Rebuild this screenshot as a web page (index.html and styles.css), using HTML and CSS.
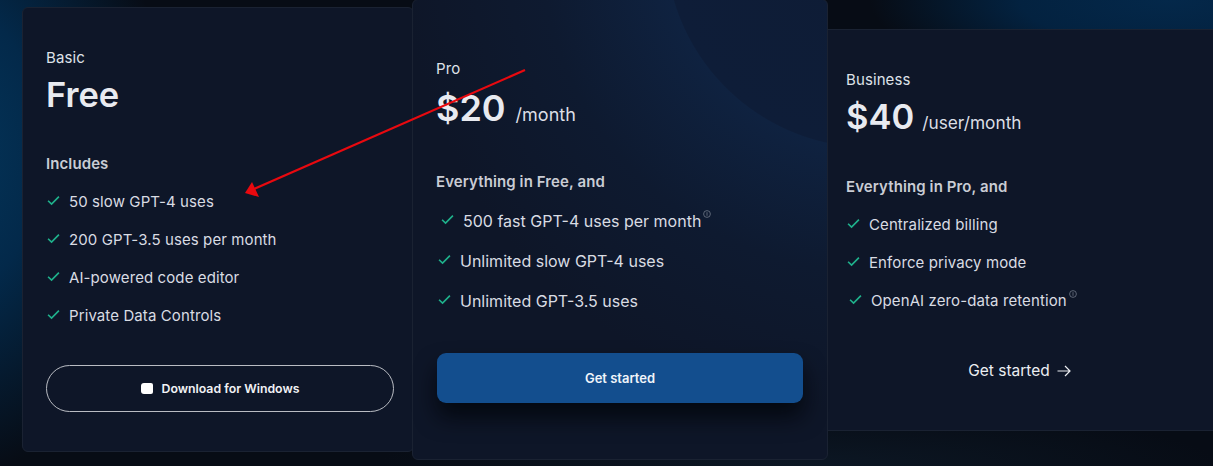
FILE: index.html
```html
<!DOCTYPE html>
<html lang="en">
<head>
<meta charset="utf-8">
<title>Pricing</title>
<link rel="stylesheet" href="styles.css">
</head>
<body>
<main class="plans">
  <section class="card card-basic">
    <p class="tier">Basic</p>
    <div class="price"><span class="amount">Free</span></div>
    <h3 class="inc">Includes</h3>
    <ul class="feats">
      <li><svg class="chk" viewBox="0 0 12 10"><path d="M1 5.2 4.2 8.4 11 1.4"/></svg><span>50 slow GPT-4 uses</span></li>
      <li><svg class="chk" viewBox="0 0 12 10"><path d="M1 5.2 4.2 8.4 11 1.4"/></svg><span>200 GPT-3.5 uses per month</span></li>
      <li><svg class="chk" viewBox="0 0 12 10"><path d="M1 5.2 4.2 8.4 11 1.4"/></svg><span>AI-powered code editor</span></li>
      <li><svg class="chk" viewBox="0 0 12 10"><path d="M1 5.2 4.2 8.4 11 1.4"/></svg><span>Private Data Controls</span></li>
    </ul>
    <a class="btn-outline"><span class="win"></span>Download for Windows</a>
  </section>
  <section class="card card-pro">
    <p class="tier">Pro</p>
    <div class="price"><span class="amount">$20</span><span class="per">/month</span></div>
    <h3 class="inc">Everything in Free, and</h3>
    <ul class="feats">
      <li class="info"><svg class="chk" viewBox="0 0 12 10"><path d="M1 5.2 4.2 8.4 11 1.4"/></svg><span>500 fast GPT-4 uses per month</span><svg class="i" viewBox="0 0 8 8"><circle cx="4" cy="4" r="3.4"/><path d="M4 2.2V5.8"/></svg></li>
      <li><svg class="chk" viewBox="0 0 12 10"><path d="M1 5.2 4.2 8.4 11 1.4"/></svg><span>Unlimited slow GPT-4 uses</span></li>
      <li><svg class="chk" viewBox="0 0 12 10"><path d="M1 5.2 4.2 8.4 11 1.4"/></svg><span>Unlimited GPT-3.5 uses</span></li>
    </ul>
    <a class="btn-solid">Get started</a>
  </section>
  <section class="card card-biz">
    <p class="tier">Business</p>
    <div class="price"><span class="amount">$40</span><span class="per">/user/month</span></div>
    <h3 class="inc">Everything in Pro, and</h3>
    <ul class="feats">
      <li><svg class="chk" viewBox="0 0 12 10"><path d="M1 5.2 4.2 8.4 11 1.4"/></svg><span>Centralized billing</span></li>
      <li><svg class="chk" viewBox="0 0 12 10"><path d="M1 5.2 4.2 8.4 11 1.4"/></svg><span>Enforce privacy mode</span></li>
      <li class="info"><svg class="chk" viewBox="0 0 12 10"><path d="M1 5.2 4.2 8.4 11 1.4"/></svg><span>OpenAI zero-data retention</span><svg class="i" viewBox="0 0 8 8"><circle cx="4" cy="4" r="3.4"/><path d="M4 2.2V5.8"/></svg></li>
    </ul>
    <a class="btn-text">Get started<svg class="arr" viewBox="0 0 14 12"><path d="M0.5 6H13M8 1l5 5-5 5"/></svg></a>
  </section>
</main>
<svg class="annot" viewBox="0 0 1213 466"><path class="annot-line" d="M525 70 254 189"/><path class="annot-head" d="M245 193 252 182 259 197Z"/></svg>
</body>
</html>
```
FILE: styles.css
```css
* { box-sizing: border-box; }
html, body { margin: 0; height: 466px; overflow: hidden; }
body {
  position: relative;
  font-family: Inter, "Liberation Sans", sans-serif;
  color: #e4e6ec;
  background:
    radial-gradient(ellipse 230px 330px at -60px 150px, #04375c 0, #03294a 45%, rgba(3,30,52,0) 100%),
    radial-gradient(ellipse 300px 90px at 1170px 0, #04284a 0, #032240 50%, rgba(3,30,52,0) 100%),
    radial-gradient(ellipse 420px 60px at 800px 466px, #0c1724 0, rgba(12,23,36,0) 100%),
    #070c15;
}
.plans {
  display: flex;
  align-items: center;
  height: 459px;
  padding-left: 22px;
}
.card {
  flex: none;
  border: 1px solid #1a2232;
  border-radius: 6px;
  background: #0e1628;
}
.card-basic { width: 392px; height: 445px; padding: 41px 20px 0 23px; }
.card-pro {
  position: relative;
  width: 416px;
  height: 461px;
  margin-left: -2px;
  padding: 60px 24px 0 23px;
  background: radial-gradient(circle at 458px -58px, #0e1c35 0, #0e1d38 205px, #0f2240 206px, #0e1a30 330px, #0e1628 470px);
}
.card-biz {
  width: 400px;
  height: 402px;
  margin-left: -1px;
  padding: 41px 0 0 18px;
  border-radius: 0;
  border-right: 0;
}
.tier { margin: 0; font-size: 15px; letter-spacing: .1px; line-height: 18px; color: #dfe2e8; }
.price { display: flex; align-items: baseline; margin-top: 7px; line-height: 42px; }
.amount { font-size: 34.5px; font-weight: 600; color: #e8eaf0; }
.per { margin-left: 10px; font-size: 18px; color: #dcdfe6; }
.inc { margin: 39px 0 0; font-size: 15px; letter-spacing: .1px; line-height: 18px; font-weight: 600; color: #c9ccd4; }
.card-pro .amount { font-size: 36px; }
.card-pro .per { margin-left: 10px; }
.card-pro .price { margin-top: 9px; }
.card-pro .inc { margin-top: 37px; }
.card-biz .amount { font-size: 34.5px; }
.card-biz .per { margin-left: 8px; font-size: 17.3px; }
.card-biz .price { margin-top: 7px; }
.card-biz .inc { margin-top: 34px; }
.feats { list-style: none; margin: 20px 0 0; padding: 0; }
.feats li { display: flex; align-items: flex-start; height: 38px; font-size: 15px; letter-spacing: .1px; line-height: 18px; color: #d9dce3; }
.chk { flex: none; width: 13px; height: 11px; margin: 2px 9px 0 1px; fill: none; stroke: #1fb28c; stroke-width: 1.5; }
.card-pro .feats { margin-top: 21px; }
.card-pro .feats li { height: 40px; font-size: 16px; letter-spacing: 0; }
.card-pro .chk { margin: 2px 9px 0 2px; }
.card-biz .feats { margin-top: 20px; }
.feats li.info .chk { margin-left: 5px; }
.card-biz .feats li.info .chk { margin-left: 3px; }
.i { flex: none; width: 8px; height: 8px; margin: -2px 0 0 2px; fill: none; stroke: #7d8593; stroke-width: 0.7; }
.btn-outline {
  display: flex; align-items: center; justify-content: center;
  width: 348px; height: 47px; margin-top: 20px;
  border: 1px solid #b9bcc3; border-radius: 24px;
  font-size: 12.3px; font-weight: 600; color: #f1f2f5;
}
.win { width: 12px; height: 11px; margin-right: 9px; border-radius: 3px 2px 2px 3px; background: #fff; }
.btn-solid {
  display: flex; align-items: center; justify-content: center;
  width: 366px; height: 50px; margin: 21px 0 0 1px;
  border-radius: 9px; background: #134e8e;
  box-shadow: 0 14px 22px rgba(2,4,8,.75);
  font-size: 13px; font-weight: 600; color: #f0f4fa;
}
.btn-text {
  display: flex; align-items: center; justify-content: center;
  width: 347px; height: 20px; margin-top: 31px;
  font-size: 15.5px; color: #eceef2;
}
.arr { width: 14px; height: 12px; margin-left: 7px; fill: none; stroke: #eceef2; stroke-width: 1.2; }
.annot { position: absolute; left: 0; top: 0; width: 1213px; height: 466px; pointer-events: none; }
.annot-line { stroke: #e8090f; stroke-width: 2.2; fill: none; }
.annot-head { fill: #e8090f; }
```
